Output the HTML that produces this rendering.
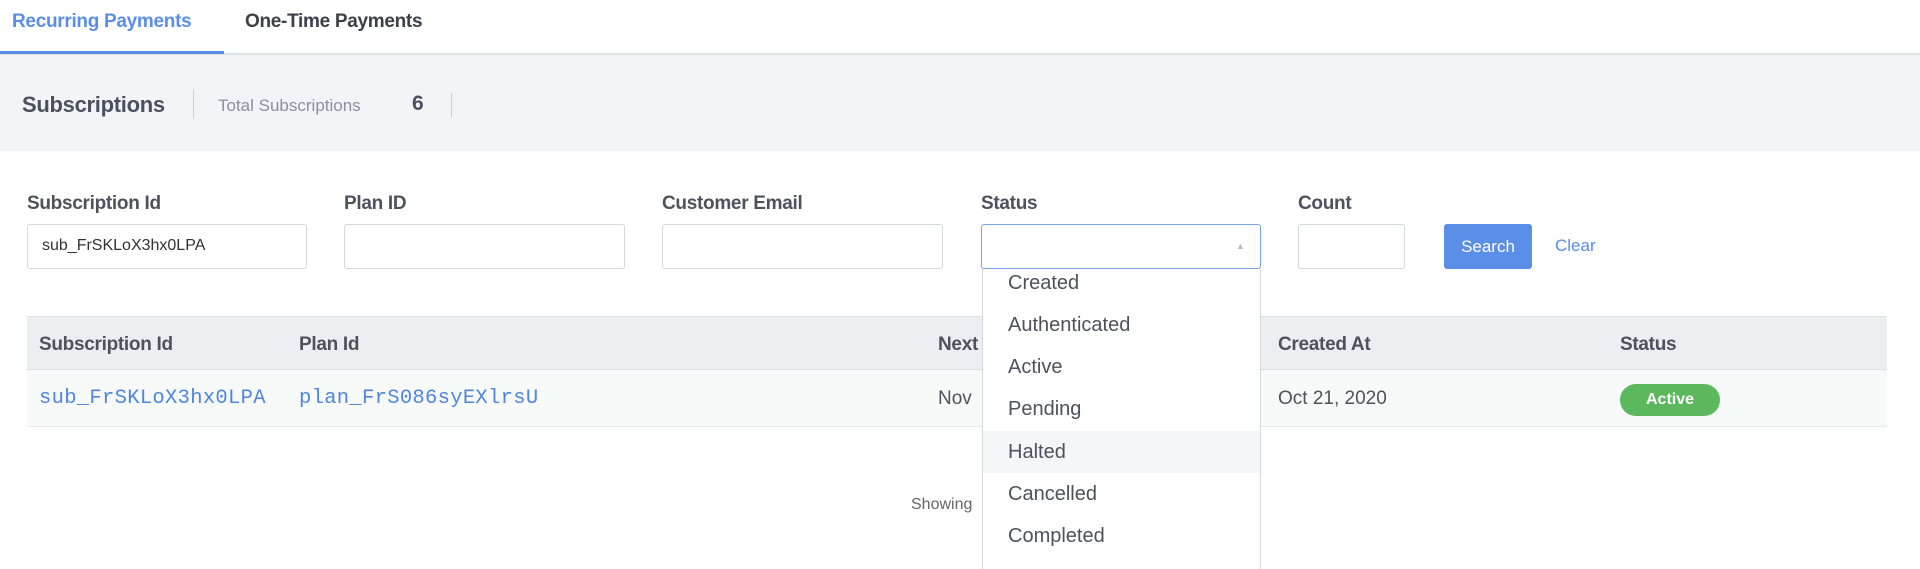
<!DOCTYPE html>
<html style="width:1920px;height:569px;overflow:hidden"><head><style>
*{box-sizing:border-box;margin:0;padding:0}
body{width:1920px;height:569px;overflow:hidden;background:#fff;font-family:"Liberation Sans",sans-serif;color:#4a4f5a;position:relative}
.a{position:absolute;white-space:nowrap}
.lbl{font-size:19px;font-weight:bold;color:#4d525c;top:193px;letter-spacing:-0.3px}
.inp{position:absolute;top:224px;height:45px;border:1px solid #d4d7dc;border-radius:3px;background:#fff}
.th{font-size:19px;font-weight:bold;color:#4d525c;top:334px;letter-spacing:-0.3px}
.dd{font-size:20px;color:#4d525c;left:1008px}
.mono{font-family:"Liberation Mono",monospace;color:#4f86dc;font-size:20.5px;letter-spacing:0.3px}
</style></head><body>
<div class="a" style="left:12px;top:11px;font-size:19px;font-weight:bold;color:#5b8ee6;letter-spacing:-0.3px">Recurring Payments</div>
<div class="a" style="left:245px;top:11px;font-size:19px;font-weight:bold;color:#3c4048;letter-spacing:-0.3px">One-Time Payments</div>
<div class="a" style="left:0;top:53px;width:1920px;height:2px;background:#dfe2e6"></div>
<div class="a" style="left:0;top:51px;width:224px;height:3px;background:#5b8ee6"></div>
<div class="a" style="left:0;top:55px;width:1920px;height:96px;background:#f2f4f7"></div>
<div class="a" style="left:22px;top:92px;font-size:22px;font-weight:bold;color:#4a5060;letter-spacing:-0.3px">Subscriptions</div>
<div class="a" style="left:193px;top:89px;width:1px;height:30px;background:#c9ccd2"></div>
<div class="a" style="left:218px;top:96px;font-size:17px;color:#8a90a0">Total Subscriptions</div>
<div class="a" style="left:412px;top:92px;font-size:21px;font-weight:bold;color:#4a5060">6</div>
<div class="a" style="left:451px;top:93px;width:1px;height:24px;background:#c9ccd2"></div>

<div class="a lbl" style="left:27px">Subscription Id</div>
<div class="a lbl" style="left:344px">Plan ID</div>
<div class="a lbl" style="left:662px">Customer Email</div>
<div class="a lbl" style="left:981px">Status</div>
<div class="a lbl" style="left:1298px">Count</div>
<div class="inp" style="left:27px;width:280px"><span class="a" style="left:14px;top:12px;font-size:16px;color:#333">sub_FrSKLoX3hx0LPA</span></div>
<div class="inp" style="left:344px;width:281px"></div>
<div class="inp" style="left:662px;width:281px"></div>
<div class="inp" style="left:981px;width:280px;border-color:#7aa3e8"><span class="a" style="left:254px;top:16px;font-size:9px;color:#bbb">▲</span></div>
<div class="inp" style="left:1298px;width:107px"></div>
<div class="a" style="left:1444px;top:224px;width:88px;height:45px;background:#5b8ee6;border-radius:3px;color:#fff;font-size:17px;text-align:center;line-height:45px">Search</div>
<div class="a" style="left:1555px;top:236px;font-size:17px;color:#5b8ee6">Clear</div>

<div class="a" style="left:27px;top:316px;width:1860px;height:54px;background:#eceff1;border-top:1px solid #dde0e3;border-bottom:1px solid #dde0e3"></div>
<div class="a th" style="left:39px">Subscription Id</div>
<div class="a th" style="left:299px">Plan Id</div>
<div class="a th" style="left:938px">Next</div>
<div class="a th" style="left:1278px">Created At</div>
<div class="a th" style="left:1620px">Status</div>
<div class="a" style="left:27px;top:370px;width:1860px;height:57px;background:#f8f9f9;border-bottom:1px solid #e6e8ea"></div>
<div class="a mono" style="left:39px;top:387px">sub_FrSKLoX3hx0LPA</div>
<div class="a mono" style="left:299px;top:387px">plan_FrS086syEXlrsU</div>
<div class="a" style="left:938px;top:388px;font-size:19px;color:#4d525c">Nov</div>
<div class="a" style="left:1278px;top:388px;font-size:19px;color:#4d525c">Oct 21, 2020</div>
<div class="a" style="left:1620px;top:384px;width:100px;height:32px;border-radius:16px;background:#5cb85c;color:#fff;font-size:16px;font-weight:bold;text-align:center;line-height:32px">Active</div>
<div class="a" style="left:911px;top:496px;font-size:16px;color:#666">Showing</div>

<div class="a" style="left:982px;top:269px;width:279px;height:300px;background:#fff;border-left:1px solid #d4d7dc;border-right:1px solid #d4d7dc"></div>
<div class="a" style="left:983px;top:431px;width:277px;height:42px;background:#f5f6f7"></div>
<div class="a dd" style="top:272px">Created</div>
<div class="a dd" style="top:314px">Authenticated</div>
<div class="a dd" style="top:356px">Active</div>
<div class="a dd" style="top:398px">Pending</div>
<div class="a dd" style="top:441px">Halted</div>
<div class="a dd" style="top:483px">Cancelled</div>
<div class="a dd" style="top:525px">Completed</div>
</body></html>
